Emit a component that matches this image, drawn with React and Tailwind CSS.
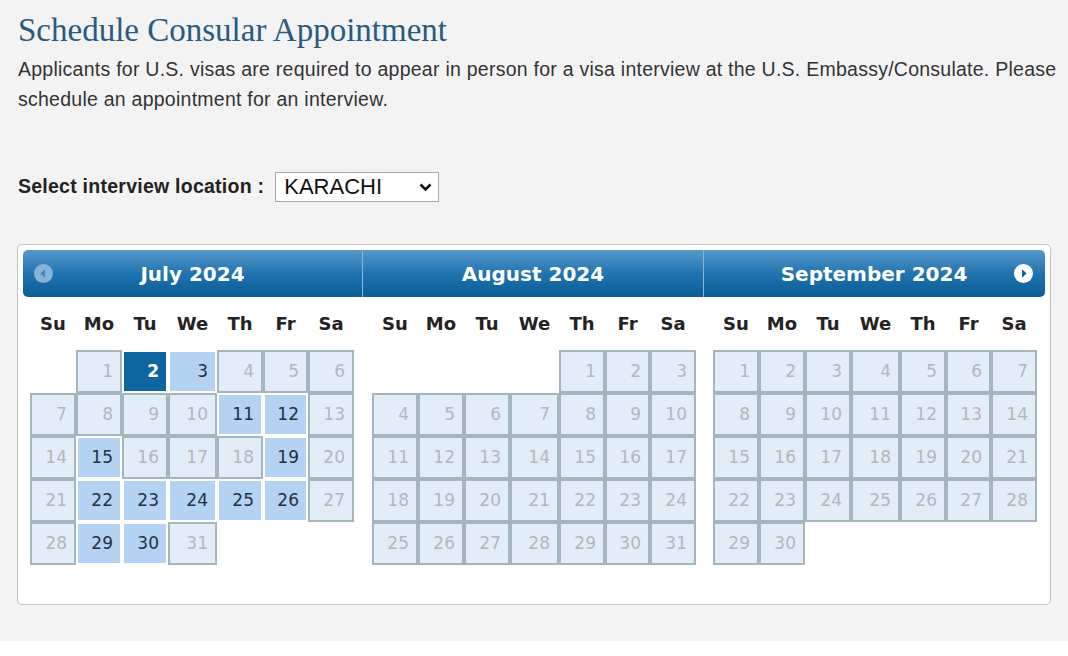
import React from "react";

const MONTHS = [
  { name: "July 2024", offset: 1, days: 31 },
  { name: "August 2024", offset: 4, days: 31 },
  { name: "September 2024", offset: 0, days: 30 },
];

const OPEN = [3, 11, 12, 15, 19, 22, 23, 24, 25, 26, 29, 30];
const DAY_NAMES = ["Su", "Mo", "Tu", "We", "Th", "Fr", "Sa"];

const Day = ({ n, state }) => {
  if (!n) return <div />;
  if (state === "selected")
    return (
      <div className="flex items-center justify-end border-2 border-white bg-[#0e66a1] pr-[7px] font-bold text-white">
        {n}
      </div>
    );
  if (state === "open")
    return (
      <div className="flex items-center justify-end border-2 border-white bg-[#b4d3f2] pr-[7px] text-[#23313f]">
        {n}
      </div>
    );
  return (
    <div className="flex items-center justify-end border-2 border-[#a5b5bd] bg-[#e2edf8] pr-[7px] text-[#b3b7ba]">
      {n}
    </div>
  );
};

const MonthGrid = ({ month, index }) => {
  const cells = [];
  for (let i = 0; i < month.offset; i++) cells.push(null);
  for (let d = 1; d <= month.days; d++) cells.push(d);

  const stateOf = (d) => {
    if (index !== 0) return "off";
    if (d === 2) return "selected";
    return OPEN.includes(d) ? "open" : "off";
  };

  return (
    <div className={index === 0 ? "w-[339px] pl-[7px]" : "w-[341px] pl-[10px]"}>
      <div className="mt-[8px] grid h-[36px] grid-cols-[46px_46px_46px_49px_46px_45px_46px] items-center text-center text-[18px] font-bold text-[#252222]">
        {DAY_NAMES.map((d) => (
          <div key={d}>{d}</div>
        ))}
      </div>
      <div className="mt-[9px] grid auto-rows-[43px] grid-cols-[46px_46px_46px_49px_46px_45px_46px] text-[17px]">
        {cells.map((d, i) => (
          <Day key={i} n={d} state={d ? stateOf(d) : null} />
        ))}
      </div>
    </div>
  );
};

const PrevIcon = () => (
  <svg width="19" height="19" viewBox="0 0 20 20">
    <circle cx="10" cy="10" r="10" fill="#86b3d6" />
    <path d="M11.5 5.5 L6.8 10 L11.5 14.5 Z" fill="#3b86bd" />
  </svg>
);

const NextIcon = () => (
  <svg width="19" height="19" viewBox="0 0 20 20">
    <circle cx="10" cy="10" r="10" fill="#ffffff" />
    <path d="M8.5 5.5 L13.2 10 L8.5 14.5 Z" fill="#115f94" />
  </svg>
);

const App = () => {
  return (
    <div className="bg-white" style={{ minHeight: 656 }}>
      <div className="h-[641px] bg-[#f3f3f3] px-[17px] pt-[10px] font-['Liberation_Sans',Arial,sans-serif]">
        <h1 className="pl-px font-['Liberation_Serif','Times_New_Roman',serif] text-[33px] leading-[40px] text-[#2a5a81]">
          Schedule Consular Appointment
        </h1>
        <p className="mt-[4px] w-[1051px] pl-px text-[19.5px] leading-[30px] tracking-[0.25px] text-[#333333]">
          Applicants for U.S. visas are required to appear in person for a visa interview at the U.S. Embassy/Consulate. Please schedule an appointment for an interview.
        </p>

        <div className="mt-[58px] flex items-center pl-px">
          <span className="text-[19.5px] font-bold tracking-[0.25px] text-[#222222]">Select interview location :</span>
          <div className="ml-[11px] flex h-[30px] w-[164px] items-center border border-[#a9a9a9] bg-white pl-[8px] pr-[6px]">
            <span className="flex-1 text-[22px] leading-none text-[#111111]">KARACHI</span>
            <svg width="13" height="9" viewBox="0 0 13 9">
              <path d="M1.5 1.5 L6.5 6.5 L11.5 1.5" fill="none" stroke="#111111" strokeWidth="2.6" />
            </svg>
          </div>
        </div>

        <div className="mt-[42px] h-[361px] rounded-[5px] border border-[#c4c4c4] bg-white px-[5px] pt-[5px] font-['DejaVu_Sans',Verdana,sans-serif]">
          <div className="flex h-[47px] overflow-hidden rounded-[5px] bg-linear-to-b from-[#5598c8] via-[#1f74b0] to-[#0a5c93] text-white">
            {MONTHS.map((m, i) => (
              <div
                key={m.name}
                className={
                  i === 0
                    ? "flex w-[339px] items-center px-[11px]"
                    : "flex w-[341px] items-center border-l border-[#8ab6d6] px-[11px]"
                }
              >
                <div className="w-[19px]">{i === 0 && <PrevIcon />}</div>
                <div className="flex-1 text-center text-[20px] font-bold">{m.name}</div>
                <div className="w-[19px]">{i === 2 && <NextIcon />}</div>
              </div>
            ))}
          </div>
          <div className="flex">
            {MONTHS.map((m, i) => (
              <MonthGrid key={m.name} month={m} index={i} />
            ))}
          </div>
        </div>
      </div>
    </div>
  );
};

export default App;
